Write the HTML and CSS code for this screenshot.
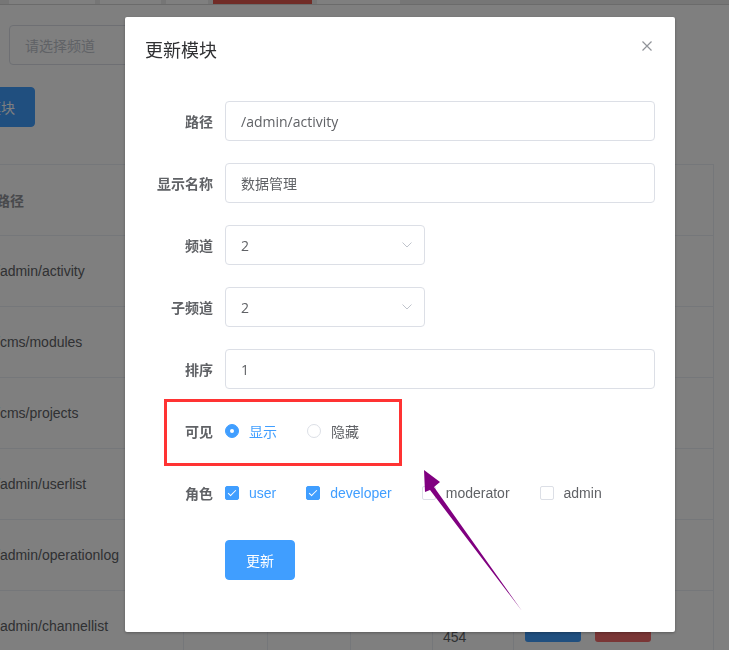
FILE: index.html
```html
<!DOCTYPE html>
<html lang="zh-CN">
<head>
<meta charset="utf-8">
<title>更新模块</title>
<link rel="stylesheet" href="styles.css">
</head>
<body>
<div class="page">
  <div class="tabbar">
    <span class="tab tab-a"></span>
    <span class="tab tab-b"></span>
    <span class="tab tab-c"></span>
    <span class="tab tab-d tab-active"></span>
    <span class="tab tab-e"></span>
  </div>
  <div class="toolbar">
    <div class="page-select">请选择频道</div>
  </div>
  <div class="actions">
    <button class="page-btn">新增模块</button>
  </div>
  <div class="grid">
    <div class="grid-row grid-head">
      <div class="cell">路径</div>
      <div class="cell">显示名称</div>
      <div class="cell">频道</div>
      <div class="cell">子频道</div>
      <div class="cell">排序</div>
      <div class="cell">操作</div>
    </div>
    <div class="grid-row">
      <div class="cell">/admin/activity</div>
      <div class="cell">数据管理</div>
      <div class="cell">2</div>
      <div class="cell">2</div>
      <div class="cell">1</div>
      <div class="cell ops"><span class="op op-edit">编辑</span><span class="op op-del">删除</span></div>
    </div>
    <div class="grid-row">
      <div class="cell">/cms/modules</div>
      <div class="cell">模块管理</div>
      <div class="cell">1</div>
      <div class="cell">1</div>
      <div class="cell">2</div>
      <div class="cell ops"><span class="op op-edit">编辑</span><span class="op op-del">删除</span></div>
    </div>
    <div class="grid-row">
      <div class="cell">/cms/projects</div>
      <div class="cell">项目管理</div>
      <div class="cell">1</div>
      <div class="cell">1</div>
      <div class="cell">3</div>
      <div class="cell ops"><span class="op op-edit">编辑</span><span class="op op-del">删除</span></div>
    </div>
    <div class="grid-row">
      <div class="cell">/admin/userlist</div>
      <div class="cell">用户管理</div>
      <div class="cell">2</div>
      <div class="cell">3</div>
      <div class="cell">4</div>
      <div class="cell ops"><span class="op op-edit">编辑</span><span class="op op-del">删除</span></div>
    </div>
    <div class="grid-row">
      <div class="cell">/admin/operationlog</div>
      <div class="cell">操作日志</div>
      <div class="cell">2</div>
      <div class="cell">3</div>
      <div class="cell">5</div>
      <div class="cell ops"><span class="op op-edit">编辑</span><span class="op op-del">删除</span></div>
    </div>
    <div class="grid-row">
      <div class="cell">/admin/channellist</div>
      <div class="cell"></div>
      <div class="cell"></div>
      <div class="cell"></div>
      <div class="cell cell-multi">6<br>454</div>
      <div class="cell ops"><span class="op op-edit"></span><span class="op op-del"></span></div>
    </div>
  </div>
</div>

<div class="mask"></div>

<div class="dialog">
  <div class="dialog-header">
    <span class="dialog-title">更新模块</span>
    <svg class="dialog-close" width="10" height="10" viewBox="0 0 10 10"><path d="M0.5 0.5 L9.5 9.5 M9.5 0.5 L0.5 9.5" stroke="#909399" stroke-width="1.2" fill="none"/></svg>
  </div>
  <div class="dialog-body">
    <div class="form-item">
      <div class="form-label">路径</div>
      <div class="form-control"><div class="field">/admin/activity</div></div>
    </div>
    <div class="form-item">
      <div class="form-label">显示名称</div>
      <div class="form-control"><div class="field">数据管理</div></div>
    </div>
    <div class="form-item">
      <div class="form-label">频道</div>
      <div class="form-control"><div class="field field-select"><span>2</span><svg width="10" height="6" viewBox="0 0 10 6"><path d="M0.5 0.5 L5 5 L9.5 0.5" stroke="#c0c4cc" stroke-width="1" fill="none"/></svg></div></div>
    </div>
    <div class="form-item">
      <div class="form-label">子频道</div>
      <div class="form-control"><div class="field field-select"><span>2</span><svg width="10" height="6" viewBox="0 0 10 6"><path d="M0.5 0.5 L5 5 L9.5 0.5" stroke="#c0c4cc" stroke-width="1" fill="none"/></svg></div></div>
    </div>
    <div class="form-item">
      <div class="form-label">排序</div>
      <div class="form-control"><div class="field">1</div></div>
    </div>
    <div class="form-item">
      <div class="form-label">可见</div>
      <div class="form-control">
        <span class="radio is-checked"><span class="radio-inner"></span><span class="radio-label">显示</span></span>
        <span class="radio"><span class="radio-inner"></span><span class="radio-label">隐藏</span></span>
      </div>
    </div>
    <div class="form-item form-item-tall">
      <div class="form-label">角色</div>
      <div class="form-control">
        <span class="check is-checked"><span class="check-inner"></span><span class="check-label">user</span></span>
        <span class="check is-checked"><span class="check-inner"></span><span class="check-label">developer</span></span>
        <span class="check"><span class="check-inner"></span><span class="check-label">moderator</span></span>
        <span class="check"><span class="check-inner"></span><span class="check-label">admin</span></span>
      </div>
    </div>
    <div class="form-item">
      <div class="form-label"></div>
      <div class="form-control"><button class="submit-btn">更新</button></div>
    </div>
  </div>
</div>

<div class="annot-box"></div>
<svg class="annot-arrow" width="729" height="650" viewBox="0 0 729 650">
  <polygon points="424,470 440,482 434,487 522,611 430,490 425,492" fill="#800080"/>
</svg>
</body>
</html>
```

FILE: styles.css
```css
html, body {
  margin: 0;
  padding: 0;
  overflow: hidden;
  width: 729px;
  height: 650px;
  background: #ffffff;
}

body {
  font-family: "Liberation Sans", "Noto Sans CJK SC", sans-serif;
  font-size: 14px;
  color: #606266;
}

.page {
  width: 729px;
}

/* top tab strip */
.tabbar {
  display: flex;
  gap: 5px;
  height: 4px;
  padding-left: 9px;
  background: #ececec;
  border-bottom: 1px solid #d6d6d6;
}
.tab {
  display: block;
  height: 4px;
  background: #ffffff;
}
.tab-a { width: 86px; }
.tab-b { width: 61px; }
.tab-c { width: 42px; }
.tab-d { width: 99px; }
.tab-e { width: 83px; }
.tab-active { background: #e2584e; }

.toolbar {
  margin-top: 20px;
  padding-left: 9px;
}
.page-select {
  width: 240px;
  height: 40px;
  box-sizing: border-box;
  border: 1px solid #dcdfe6;
  border-radius: 4px;
  padding: 0 15px;
  display: flex;
  align-items: center;
  color: #c0c4cc;
  font-family: "Noto Sans CJK SC", sans-serif;
}

.actions {
  margin-top: 22px;
}
.page-btn {
  margin-left: -61px;
  width: 96px;
  height: 40px;
  border: 1px solid #409eff;
  border-radius: 4px;
  background: #409eff;
  color: #ffffff;
  font-family: "Noto Sans CJK SC", sans-serif;
  font-size: 14px;
  padding: 0;
}

/* table */
.grid {
  margin-top: 37px;
  margin-left: -14px;
  width: 728px;
  border-top: 1px solid #ebeef5;
}
.grid-row {
  display: grid;
  grid-template-columns: 198px 84px 83px 82px 81px 200px;
  height: 71px;
}
.cell {
  box-sizing: border-box;
  border-right: 1px solid #ebeef5;
  border-bottom: 1px solid #ebeef5;
  padding: 0 10px;
  display: flex;
  align-items: center;
  line-height: 23px;
  color: #606266;
  white-space: nowrap;
  overflow: hidden;
}
.grid-head .cell {
  color: #909399;
  font-weight: bold;
  font-family: "Noto Sans CJK SC", sans-serif;
}
.cell-multi {
  display: block;
  padding-top: 12px;
}
.ops {
  padding-left: 11px;
  gap: 14px;
}
.op {
  display: inline-flex;
  align-items: center;
  justify-content: center;
  width: 56px;
  height: 32px;
  border-radius: 3px;
  color: #ffffff;
  font-size: 12px;
  font-family: "Noto Sans CJK SC", sans-serif;
}
.op-edit { background: #409eff; }
.op-del { background: #f56c6c; }

/* modal */
.mask {
  position: fixed;
  inset: 0;
  background: rgba(0, 0, 0, 0.5);
}

.dialog {
  position: fixed;
  top: 17px;
  left: 125px;
  width: 550px;
  background: #ffffff;
  border-radius: 2px;
  box-shadow: 0 1px 3px rgba(0, 0, 0, 0.3);
}
.dialog-header {
  position: relative;
  padding: 20px 20px 10px;
}
.dialog-title {
  display: block;
  font-family: "Noto Sans CJK SC", sans-serif;
  font-size: 18px;
  line-height: 24px;
  color: #303133;
}
.dialog-close {
  position: absolute;
  top: 24px;
  right: 23px;
}
.dialog-body {
  padding: 30px 20px;
}

.form-item {
  display: flex;
  margin-bottom: 22px;
}
.form-item-tall {
  margin-bottom: 27px;
}
.form-label {
  width: 80px;
  flex: none;
  box-sizing: border-box;
  padding-right: 12px;
  text-align: right;
  line-height: 40px;
  font-family: "Noto Sans CJK SC", sans-serif;
  font-weight: bold;
  color: #606266;
}
.form-control {
  flex: 1;
  display: flex;
  align-items: center;
  min-height: 40px;
}
.field {
  width: 100%;
  height: 40px;
  box-sizing: border-box;
  border: 1px solid #dcdfe6;
  border-radius: 4px;
  padding: 0 15px;
  display: flex;
  align-items: center;
  font-family: "Open Sans", "Noto Sans CJK SC", sans-serif;
  font-size: 14px;
  color: #606266;
}
.field-select {
  width: 200px;
  justify-content: space-between;
  padding-right: 12px;
}

.radio, .check {
  display: inline-flex;
  align-items: center;
  margin-right: 30px;
  color: #606266;
}
.radio-label, .check-label {
  padding-left: 10px;
  line-height: 19px;
}
.radio-label {
  font-family: "Noto Sans CJK SC", sans-serif;
}
.radio-inner {
  position: relative;
  width: 14px;
  height: 14px;
  box-sizing: border-box;
  border: 1px solid #dcdfe6;
  border-radius: 50%;
  background: #ffffff;
}
.radio.is-checked .radio-inner {
  background: #409eff;
  border-color: #409eff;
}
.radio.is-checked .radio-inner::after {
  content: "";
  position: absolute;
  left: 50%;
  top: 50%;
  width: 4px;
  height: 4px;
  margin: -2px 0 0 -2px;
  border-radius: 50%;
  background: #ffffff;
}
.radio.is-checked, .check.is-checked {
  color: #409eff;
}

.check-inner {
  position: relative;
  width: 14px;
  height: 14px;
  box-sizing: border-box;
  border: 1px solid #dcdfe6;
  border-radius: 2px;
  background: #ffffff;
}
.check.is-checked .check-inner {
  background: #409eff;
  border-color: #409eff;
}
.check.is-checked .check-inner::after {
  content: "";
  position: absolute;
  left: 4px;
  top: 1px;
  width: 3px;
  height: 7px;
  border: 1px solid #ffffff;
  border-left: 0;
  border-top: 0;
  transform: rotate(45deg);
}

.submit-btn {
  height: 40px;
  padding: 0 20px;
  border: 1px solid #409eff;
  border-radius: 4px;
  background: #409eff;
  color: #ffffff;
  font-family: "Noto Sans CJK SC", sans-serif;
  font-size: 14px;
}

/* annotations */
.annot-box {
  position: absolute;
  left: 164px;
  top: 399px;
  width: 238px;
  height: 67px;
  box-sizing: border-box;
  border: 3px solid #ff3333;
}
.annot-arrow {
  position: absolute;
  left: 0;
  top: 0;
  pointer-events: none;
}
```
